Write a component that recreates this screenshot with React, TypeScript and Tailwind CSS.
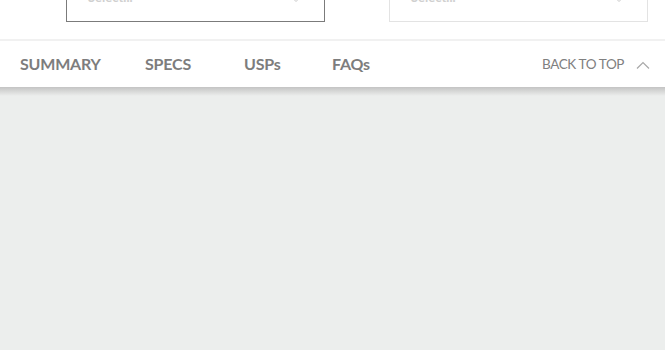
import { ChevronDown } from "lucide-react";

const tabs = [
  { label: "SUMMARY", w: "w-[125px]" },
  { label: "SPECS", w: "w-[99px]" },
  { label: "USPs", w: "w-[88px]" },
  { label: "FAQs", w: "w-auto" },
];

const SelectBox = ({ dark }: { dark?: boolean }) => (
  <div
    className={`flex h-[40px] w-[259px] items-center justify-between border pl-[21px] pr-[22px] ${
      dark ? "border-[#7b7b7b]" : "border-[#e3e3e3]"
    }`}
  >
    <span className="mb-[9px] text-[13px] font-bold text-[#d0d0d0]">Select...</span>
    <ChevronDown size={12} strokeWidth={1.5} className="mb-[5px] text-[#b5b5b5]" />
  </div>
);

export default function App() {
  return (
    <div className="flex h-[350px] w-full flex-col overflow-hidden bg-[#eceeed] font-['Lato',sans-serif]">
      <div className="flex h-[39px] shrink-0 items-end bg-white pb-[17px]">
        <div className="ml-[66px] flex gap-[64px]">
          <SelectBox dark />
          <SelectBox />
        </div>
      </div>
      <div className="h-[2px] shrink-0 bg-[#f1f1f1]" />
      <nav className="flex h-[46px] shrink-0 items-center bg-white pl-[20px] pr-[15px]">
        <div className="flex">
          {tabs.map((t) => (
            <span key={t.label} className={`${t.w} text-[16px] font-bold tracking-[-0.2px] text-[#7d7d7d]`}>
              {t.label}
            </span>
          ))}
        </div>
        <div className="ml-auto flex items-center gap-[12px] text-[#808080]">
          <span className="text-[13.5px] tracking-[-0.4px]">BACK TO TOP</span>
          <svg width="14" height="8" viewBox="0 0 14 8" fill="none" className="mt-[1px]">
            <polyline points="1,7.5 7,1.5 13,7.5" stroke="#a8a8a8" strokeWidth="1.2" />
          </svg>
        </div>
      </nav>
      <div className="h-[9px] shrink-0 bg-gradient-to-b from-[#c4c4c4] to-[#eceeed]" />
    </div>
  );
}
